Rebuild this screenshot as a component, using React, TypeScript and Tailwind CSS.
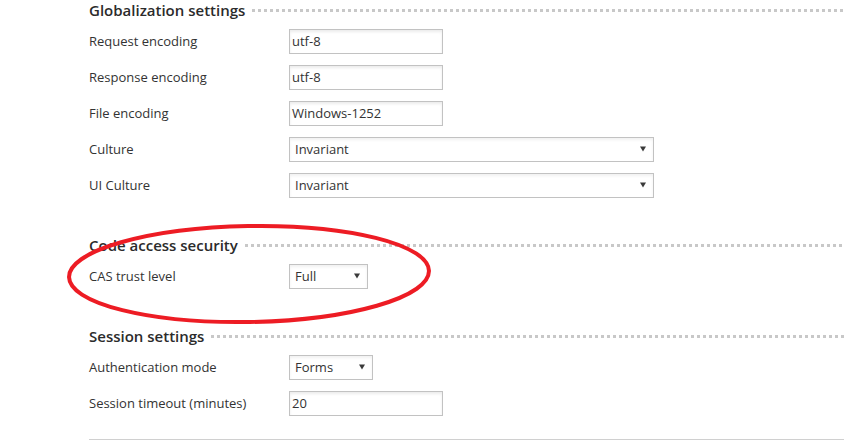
const font = { fontFamily: '"Open Sans", "Noto Sans", sans-serif' };

type Field =
  | { kind: "text"; label: string; value: string; width: string }
  | { kind: "select"; label: string; value: string; width: string };

const sections: { title: string; fields: Field[] }[] = [
  {
    title: "Globalization settings",
    fields: [
      { kind: "text", label: "Request encoding", value: "utf-8", width: "w-[154px]" },
      { kind: "text", label: "Response encoding", value: "utf-8", width: "w-[154px]" },
      { kind: "text", label: "File encoding", value: "Windows-1252", width: "w-[154px]" },
      { kind: "select", label: "Culture", value: "Invariant", width: "w-[365px]" },
      { kind: "select", label: "UI Culture", value: "Invariant", width: "w-[365px]" },
    ],
  },
  {
    title: "Code access security",
    fields: [{ kind: "select", label: "CAS trust level", value: "Full", width: "w-[79px]" }],
  },
  {
    title: "Session settings",
    fields: [
      { kind: "select", label: "Authentication mode", value: "Forms", width: "w-[84px]" },
      { kind: "text", label: "Session timeout (minutes)", value: "20", width: "w-[154px]" },
    ],
  },
];

const SectionHeading = ({ title }: { title: string }) => (
  <div className="flex items-center h-[20px]">
    <h2 className="text-[15px] font-semibold text-[#2b2b2b] leading-[20px] whitespace-nowrap pr-[7px] -mt-[1px]">
      {title}
    </h2>
    <div className="flex-1 h-[3px] bg-[repeating-linear-gradient(to_right,#c8c8c8_0_3px,transparent_3px_6px)]" />
  </div>
);

const FieldRow = ({ field }: { field: Field }) => (
  <div className="flex items-center h-[25px]">
    <label className="w-[200px] text-[13px] text-[#333]">{field.label}</label>
    {field.kind === "text" ? (
      <div
        className={`${field.width} h-[25px] border border-[#c2c2c2] shadow-[inset_0_2px_3px_rgba(0,0,0,0.08)] flex items-center pl-[2px] text-[13px] text-[#333]`}
      >
        {field.value}
      </div>
    ) : (
      <div
        className={`${field.width} h-[25px] border border-[#c2c2c2] shadow-[inset_0_2px_3px_rgba(0,0,0,0.06)] flex items-center justify-between pl-[5px] pr-[7px] text-[13px] text-[#333]`}
      >
        <span>{field.value}</span>
        <svg width="6" height="6" viewBox="0 0 6 6" className="-mt-[2px]">
          <path d="M0 0.5h6L3 5.5z" fill="#3a3a3a" />
        </svg>
      </div>
    )}
  </div>
);

export default function App() {
  return (
    <div className="relative w-[844px] h-[443px] bg-white overflow-hidden" style={font}>
      <div className="pl-[89px] flex flex-col gap-[37px]">
        {sections.map((s) => (
          <section key={s.title} className="flex flex-col gap-[9px]">
            <SectionHeading title={s.title} />
            <div className="flex flex-col gap-[11px]">
              {s.fields.map((f) => (
                <FieldRow key={f.label} field={f} />
              ))}
            </div>
          </section>
        ))}
        <div className="h-px bg-[#d0d0d0] -mt-[14px]" />
      </div>

      {/* red annotation ring */}
      <svg className="absolute left-0 top-0 pointer-events-none" width="844" height="443">
        <ellipse
          cx="249"
          cy="274"
          rx="180"
          ry="48"
          transform="rotate(-1 249 274)"
          fill="none"
          stroke="#ed1c24"
          strokeWidth="4"
        />
      </svg>
    </div>
  );
}
